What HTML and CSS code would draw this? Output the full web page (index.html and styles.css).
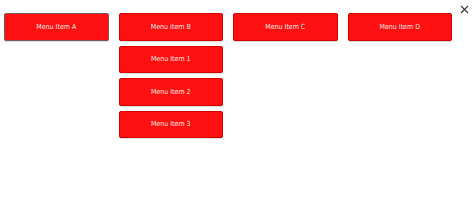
FILE: index.html
```html
<!DOCTYPE html>
<html lang="en">
<head>
    <meta charset="UTF-8">
    <title>Menu</title>
    <link rel="stylesheet" href="styles.css">
</head>
<body>
    <button class="close" aria-label="Close">
        <svg width="9" height="9" viewBox="0 0 9 9"><path d="M1 1L8 8M8 1L1 8" stroke="#333" stroke-width="1.1" fill="none"/></svg>
    </button>
    <div class="menu">
        <div class="menu-col">
            <button class="item active">Menu Item A</button>
        </div>
        <div class="menu-col">
            <button class="item">Menu Item B</button>
            <button class="item">Menu Item 1</button>
            <button class="item">Menu Item 2</button>
            <button class="item">Menu Item 3</button>
        </div>
        <div class="menu-col">
            <button class="item">Menu Item C</button>
        </div>
        <div class="menu-col">
            <button class="item">Menu Item D</button>
        </div>
    </div>
</body>
</html>
```

FILE: styles.css
```css
* {
    margin: 0;
    padding: 0;
    box-sizing: border-box;
}
body {
    background-color: #fff;
    font-family: 'DejaVu Sans Condensed', 'DejaVu Sans', sans-serif;
    width: 474px;
    height: 219px;
    overflow: hidden;
}
.menu {
    display: flex;
    gap: 10px;
    padding: 13px 0 0 4px;
}
.menu-col {
    display: flex;
    flex-direction: column;
    gap: 5px;
    width: 104.5px;
}
.item {
    height: 27.5px;
    background-color: #fe1010;
    color: #ffe6e6;
    border: 1px solid #d40000;
    border-radius: 2px;
    font-family: 'DejaVu Sans Condensed', 'DejaVu Sans', sans-serif;
    font-size: 7px;
    box-shadow: 0 1px 1px rgba(0, 0, 0, 0.15);
}
.item.active {
    border-color: #7a5a5a;
}
.close {
    position: absolute;
    top: 2px;
    right: 5px;
    background: none;
    border: none;
    width: 9px;
    height: 9px;
}
```
